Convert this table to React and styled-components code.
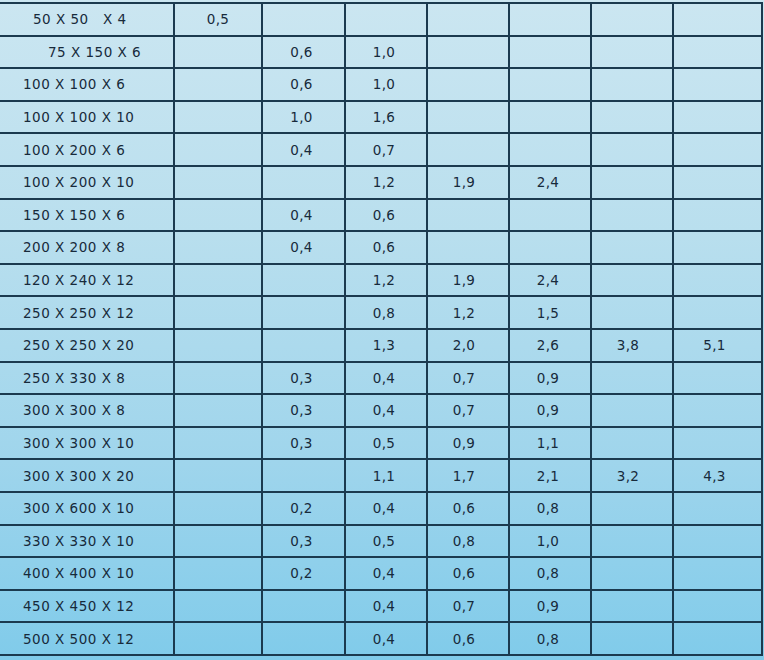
import React from "react";
import styled, { createGlobalStyle } from "styled-components";

const GlobalStyle = createGlobalStyle`
  html, body {
    margin: 0;
    padding: 0;
  }
  body {
    width: 764px;
    height: 660px;
    overflow: hidden;
    background: linear-gradient(180deg, #cbe6f1 0%, #b9dfee 35%, #9fd5ec 70%, #80cbea 100%);
    font-family: "DejaVu Sans", "Liberation Sans", sans-serif;
  }
`;

const Page = styled.div`
  padding-top: 2px;
`;

const Table = styled.table`
  border-collapse: collapse;
  table-layout: fixed;
  width: 762px;
`;

const Col = styled.col`
  width: ${(p) => p.$w}px;
`;

const Row = styled.tr`
  height: 32.6px;
`;

const SizeCell = styled.td`
  border: 2px solid #1b3a4f;
  border-left: none;
  padding: 0 0 0 ${(p) => p.$indent || 23}px;
  font-size: 13.5px;
  letter-spacing: 0.5px;
  color: #172a3b;
  white-space: pre;
  vertical-align: middle;
  overflow: hidden;
`;

const ValueCell = styled.td`
  border: 2px solid #1b3a4f;
  padding: 0 ${(p) => p.$shift}px 0 0;
  text-align: center;
  font-size: 13.5px;
  letter-spacing: 0.4px;
  color: #172a3b;
  vertical-align: middle;
  overflow: hidden;
`;

const widths = [174, 88, 83, 82, 82, 82, 82, 89];
// small per-column nudges so the numbers sit where the original has them
const shifts = [0, 4, 4, 8, 4, 8, 6];

const rows = [
  { size: "50 X 50   X 4", indent: 33, v: ["0,5"] },
  { size: "75 X 150 X 6", indent: 48, v: ["", "0,6", "1,0"] },
  { size: "100 X 100 X 6", v: ["", "0,6", "1,0"] },
  { size: "100 X 100 X 10", v: ["", "1,0", "1,6"] },
  { size: "100 X 200 X 6", v: ["", "0,4", "0,7"] },
  { size: "100 X 200 X 10", v: ["", "", "1,2", "1,9", "2,4"] },
  { size: "150 X 150 X 6", v: ["", "0,4", "0,6"] },
  { size: "200 X 200 X 8", v: ["", "0,4", "0,6"] },
  { size: "120 X 240 X 12", v: ["", "", "1,2", "1,9", "2,4"] },
  { size: "250 X 250 X 12", v: ["", "", "0,8", "1,2", "1,5"] },
  { size: "250 X 250 X 20", v: ["", "", "1,3", "2,0", "2,6", "3,8", "5,1"] },
  { size: "250 X 330 X 8", v: ["", "0,3", "0,4", "0,7", "0,9"] },
  { size: "300 X 300 X 8", v: ["", "0,3", "0,4", "0,7", "0,9"] },
  { size: "300 X 300 X 10", v: ["", "0,3", "0,5", "0,9", "1,1"] },
  { size: "300 X 300 X 20", v: ["", "", "1,1", "1,7", "2,1", "3,2", "4,3"] },
  { size: "300 X 600 X 10", v: ["", "0,2", "0,4", "0,6", "0,8"] },
  { size: "330 X 330 X 10", v: ["", "0,3", "0,5", "0,8", "1,0"] },
  { size: "400 X 400 X 10", v: ["", "0,2", "0,4", "0,6", "0,8"] },
  { size: "450 X 450 X 12", v: ["", "", "0,4", "0,7", "0,9"] },
  { size: "500 X 500 X 12", v: ["", "", "0,4", "0,6", "0,8"] },
];

export default function App() {
  return (
    <Page>
      <GlobalStyle />
      <Table>
        <colgroup>
          {widths.map((w, i) => (
            <Col key={i} $w={w} />
          ))}
        </colgroup>
        <tbody>
          {rows.map((r) => (
            <Row key={r.size}>
              <SizeCell $indent={r.indent}>{r.size}</SizeCell>
              {shifts.map((s, i) => (
                <ValueCell key={i} $shift={s}>
                  {r.v[i] || ""}
                </ValueCell>
              ))}
            </Row>
          ))}
        </tbody>
      </Table>
    </Page>
  );
}
